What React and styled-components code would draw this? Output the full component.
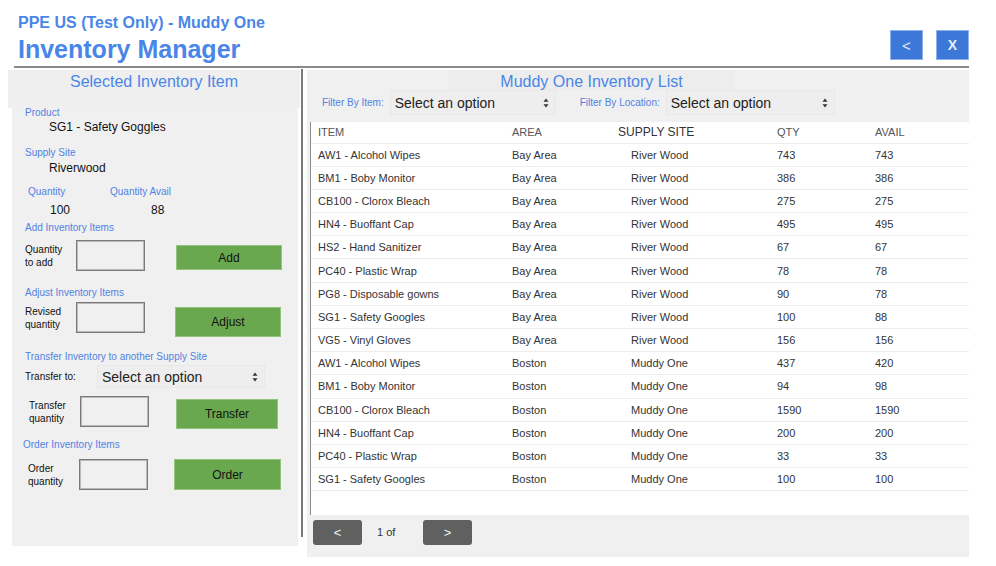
import React from "react";
import styled, { createGlobalStyle } from "styled-components";

const GlobalStyle = createGlobalStyle`
  html, body {
    margin: 0;
    padding: 0;
    background: #ffffff;
  }
  body {
    font-family: "Liberation Sans", Arial, sans-serif;
  }
`;

const BLUE = "#4a86e8";
const LABEL_BLUE = "#5282e4";

const inventory = [
  ["AW1 - Alcohol Wipes", "Bay Area", "River Wood", 743, 743],
  ["BM1 - Boby Monitor", "Bay Area", "River Wood", 386, 386],
  ["CB100 - Clorox Bleach", "Bay Area", "River Wood", 275, 275],
  ["HN4 - Buoffant Cap", "Bay Area", "River Wood", 495, 495],
  ["HS2 - Hand Sanitizer", "Bay Area", "River Wood", 67, 67],
  ["PC40 - Plastic Wrap", "Bay Area", "River Wood", 78, 78],
  ["PG8 - Disposable gowns", "Bay Area", "River Wood", 90, 78],
  ["SG1 - Safety Googles", "Bay Area", "River Wood", 100, 88],
  ["VG5 - Vinyl Gloves", "Bay Area", "River Wood", 156, 156],
  ["AW1 - Alcohol Wipes", "Boston", "Muddy One", 437, 420],
  ["BM1 - Boby Monitor", "Boston", "Muddy One", 94, 98],
  ["CB100 - Clorox Bleach", "Boston", "Muddy One", 1590, 1590],
  ["HN4 - Buoffant Cap", "Boston", "Muddy One", 200, 200],
  ["PC40 - Plastic Wrap", "Boston", "Muddy One", 33, 33],
  ["SG1 - Safety Googles", "Boston", "Muddy One", 100, 100],
];

const Page = styled.div`
  width: 996px;
  height: 566px;
  overflow: hidden;
  position: relative;
`;

const Header = styled.header`
  display: flex;
  justify-content: space-between;
  padding: 14px 27px 0 18px;
`;

const TitleGroup = styled.div`
  display: flex;
  flex-direction: column;
`;

const AppName = styled.div`
  font-size: 16px;
  line-height: 18px;
  font-weight: bold;
  color: ${BLUE};
`;

const PageTitle = styled.h1`
  margin: 2px 0 0;
  font-size: 25px;
  line-height: 30px;
  font-weight: bold;
  color: ${BLUE};
`;

const HeaderActions = styled.div`
  display: flex;
  gap: 13px;
  margin-top: 16px;
`;

const NavButton = styled.button`
  width: 33px;
  height: 30px;
  padding: 0;
  border: 1px solid #8fb2ee;
  background: #3c78d8;
  color: #e8eef8;
  font-family: "Liberation Sans", Arial, sans-serif;
  font-size: ${(p) => (p.$bold ? "14px" : "15px")};
  font-weight: ${(p) => (p.$bold ? "bold" : "normal")};
  cursor: pointer;
`;

const Rule = styled.hr`
  margin: 2px 27px 0 14px;
  border: 0;
  border-top: 2px solid #8a8a8a;
  height: 0;
`;

const Main = styled.main`
  display: flex;
  align-items: flex-start;
  padding-left: 8px;
  margin-top: 1px;
`;

/* ---------- left panel ---------- */

const LeftColumn = styled.section`
  width: 292px;
  margin-top: 1px;
  display: flex;
  flex-direction: column;
`;

const LeftTitle = styled.div`
  height: 38px;
  background: #efefef;
  text-align: center;
  font-size: 16px;
  line-height: 20px;
  padding-top: 2px;
  box-sizing: border-box;
  color: ${BLUE};
`;

const LeftBody = styled.div`
  margin: 0 2px 0 4px;
  height: 438px;
  background: #f0f0f0;
  padding-left: 13px;
  box-sizing: border-box;
  display: flex;
  flex-direction: column;
  align-items: flex-start;
`;

const FieldLabel = styled.div`
  font-size: 10px;
  line-height: 10px;
  color: ${LABEL_BLUE};
  margin-top: ${(p) => p.$top || 0}px;
  margin-left: ${(p) => p.$left || 0}px;
  white-space: nowrap;
`;

const FieldValue = styled.div`
  font-size: 12px;
  line-height: 14px;
  color: #111;
  margin-top: ${(p) => p.$top || 0}px;
  padding-left: ${(p) => p.$indent || 0}px;
`;

const QtyGrid = styled.div`
  display: grid;
  grid-template-columns: 82px auto;
  margin-top: ${(p) => p.$top}px;
  padding-left: 3px;
`;

const QtyValue = styled.div`
  font-size: 12px;
  line-height: 14px;
  color: #111;
  padding-left: ${(p) => p.$indent}px;
`;

const ActionRow = styled.div`
  display: flex;
  align-items: center;
  margin-top: ${(p) => p.$top}px;
  height: 31px;
`;

const RowLabel = styled.div`
  width: ${(p) => p.$width}px;
  padding-left: ${(p) => p.$indent || 0}px;
  box-sizing: border-box;
  font-size: 10px;
  line-height: 13px;
  color: #111;
`;

const QtyInput = styled.input`
  width: 69px;
  height: 31px;
  box-sizing: border-box;
  border: 1px solid #7a7a7a;
  box-shadow: inset 0 0 0 1px #b9b9b9;
  background: #f0f0f0;
  padding: 0 4px;
  font-size: 12px;
`;

const GreenButton = styled.button`
  width: ${(p) => p.$width}px;
  height: ${(p) => p.$height}px;
  margin-left: ${(p) => p.$gap}px;
  align-self: flex-start;
  margin-top: ${(p) => p.$offset}px;
  background: #6aa84f;
  border: 1px solid #93c47d;
  color: #111;
  font-family: "Liberation Sans", Arial, sans-serif;
  font-size: 12px;
  padding: 0;
  cursor: pointer;
`;

const SelectRow = styled.div`
  display: flex;
  align-items: center;
  height: 23px;
  margin-top: ${(p) => p.$top}px;
`;

const SelectBox = styled.div`
  width: ${(p) => p.$width}px;
  height: ${(p) => p.$height}px;
  box-sizing: border-box;
  background: #eeeeee;
  border: 1px solid #e8e8e8;
  display: flex;
  align-items: center;
  justify-content: space-between;
  padding: 0 6px 0 4px;
  font-size: 14px;
  color: #222;
`;

const Divider = styled.div`
  width: 2px;
  height: 468px;
  margin-left: 1px;
  background: #7a7a7a;
`;

/* ---------- right panel ---------- */

const RightPanel = styled.section`
  width: 662px;
  margin-left: 4px;
  margin-top: 1px;
  height: 487px;
  background: #f0f0f0;
  display: flex;
  flex-direction: column;
`;

const RightTitle = styled.div`
  margin-left: 141px;
  width: 287px;
  height: 20px;
  background: #ededed;
  text-align: center;
  font-size: 16px;
  line-height: 23px;
  color: ${BLUE};
`;

const FilterRow = styled.div`
  display: flex;
  align-items: center;
  height: 25px;
  padding-left: 15px;
`;

const FilterLabel = styled.span`
  font-size: 10px;
  color: ${LABEL_BLUE};
  margin-left: ${(p) => p.$left || 0}px;
  margin-right: 6px;
  white-space: nowrap;
`;

const TableWrap = styled.div`
  margin: 7px 0 0 3px;
  height: 393px;
  background: #ffffff;
  border-left: 1px solid #8c8c8c;
`;

const Row = styled.div`
  display: grid;
  grid-template-columns: 194px 106px 159px 98px 1fr;
  align-items: center;
  padding-left: 7px;
  height: ${(p) => (p.$head ? "21.5px" : "23.2px")};
  box-sizing: border-box;
  border-bottom: 1px solid #ececec;
  font-size: 11px;
  color: ${(p) => (p.$head ? "#555" : "#333")};
`;

const Cell = styled.div`
  padding-left: ${(p) => p.$indent || 0}px;
  white-space: nowrap;
  font-size: ${(p) => (p.$big ? "12px" : "inherit")};
  color: ${(p) => (p.$big ? "#333" : "inherit")};
`;

const Pager = styled.div`
  display: flex;
  align-items: flex-start;
  height: 42px;
  padding: 5px 0 0 6px;
  box-sizing: border-box;
  align-self: stretch;
`;

const PageButton = styled.button`
  width: 49px;
  height: 25px;
  border: 0;
  border-radius: 3px;
  background: #606060;
  color: #f2f2f2;
  font-family: "Liberation Sans", Arial, sans-serif;
  font-size: 13px;
  padding: 0;
  cursor: pointer;
`;

const PageInfo = styled.span`
  font-size: 11px;
  line-height: 25px;
  color: #333;
  margin-left: 15px;
  width: 46px;
`;

const UpDown = () => (
  <svg width="6" height="10" viewBox="0 0 6 10">
    <path d="M3 0.5 L5.5 3.8 L0.5 3.8 Z" fill="#333" />
    <path d="M3 9.5 L5.5 6.2 L0.5 6.2 Z" fill="#333" />
  </svg>
);

const Select = ({ width, height }) => (
  <SelectBox $width={width} $height={height}>
    <span>Select an option</span>
    <UpDown />
  </SelectBox>
);

const App = () => {
  return (
    <>
      <GlobalStyle />
      <Page>
        <Header>
          <TitleGroup>
            <AppName>PPE US (Test Only) - Muddy One</AppName>
            <PageTitle>Inventory Manager</PageTitle>
          </TitleGroup>
          <HeaderActions>
            <NavButton>&lt;</NavButton>
            <NavButton $bold>X</NavButton>
          </HeaderActions>
        </Header>
        <Rule />
        <Main>
          <LeftColumn>
            <LeftTitle>Selected Inventory Item</LeftTitle>
            <LeftBody>
              <FieldLabel>Product</FieldLabel>
              <FieldValue $top={2} $indent={24}>
                SG1 - Safety Goggles
              </FieldValue>
              <FieldLabel $top={14}>Supply Site</FieldLabel>
              <FieldValue $top={3} $indent={24}>
                Riverwood
              </FieldValue>
              <QtyGrid $top={12}>
                <FieldLabel>Quantity</FieldLabel>
                <FieldLabel>Quantity Avail</FieldLabel>
              </QtyGrid>
              <QtyGrid $top={6}>
                <QtyValue $indent={22}>100</QtyValue>
                <QtyValue $indent={41}>88</QtyValue>
              </QtyGrid>

              <FieldLabel $top={6}>Add Inventory Items</FieldLabel>
              <ActionRow $top={7}>
                <RowLabel $width={51}>
                  Quantity
                  <br />
                  to add
                </RowLabel>
                <QtyInput />
                <GreenButton $width={106} $height={25} $gap={31} $offset={5}>
                  Add
                </GreenButton>
              </ActionRow>

              <FieldLabel $top={17}>Adjust Inventory Items</FieldLabel>
              <ActionRow $top={4}>
                <RowLabel $width={51}>
                  Revised
                  <br />
                  quantity
                </RowLabel>
                <QtyInput />
                <GreenButton $width={106} $height={30} $gap={30} $offset={5}>
                  Adjust
                </GreenButton>
              </ActionRow>

              <FieldLabel $top={19}>
                Transfer Inventory to another Supply Site
              </FieldLabel>
              <SelectRow $top={3}>
                <RowLabel $width={72}>Transfer to:</RowLabel>
                <Select width={168} height={23} />
              </SelectRow>
              <ActionRow $top={8}>
                <RowLabel $width={55} $indent={4}>
                  Transfer
                  <br />
                  quantity
                </RowLabel>
                <QtyInput />
                <GreenButton $width={102} $height={30} $gap={27} $offset={3}>
                  Transfer
                </GreenButton>
              </ActionRow>

              <FieldLabel $top={13} $left={-2}>
                Order Inventory Items
              </FieldLabel>
              <ActionRow $top={9}>
                <RowLabel $width={54} $indent={3}>
                  Order
                  <br />
                  quantity
                </RowLabel>
                <QtyInput />
                <GreenButton $width={107} $height={31} $gap={26} $offset={0}>
                  Order
                </GreenButton>
              </ActionRow>
            </LeftBody>
          </LeftColumn>

          <Divider />

          <RightPanel>
            <RightTitle>Muddy One Inventory List</RightTitle>
            <FilterRow>
              <FilterLabel>Filter By Item:</FilterLabel>
              <Select width={166} height={25} />
              <FilterLabel $left={24}>Filter By Location:</FilterLabel>
              <Select width={169} height={25} />
            </FilterRow>
            <TableWrap>
              <Row $head>
                <Cell>ITEM</Cell>
                <Cell>AREA</Cell>
                <Cell $big>SUPPLY SITE</Cell>
                <Cell>QTY</Cell>
                <Cell>AVAIL</Cell>
              </Row>
              {inventory.map(([item, area, site, qty, avail], i) => (
                <Row key={i}>
                  <Cell>{item}</Cell>
                  <Cell>{area}</Cell>
                  <Cell $indent={13}>{site}</Cell>
                  <Cell>{qty}</Cell>
                  <Cell>{avail}</Cell>
                </Row>
              ))}
            </TableWrap>
            <Pager>
              <PageButton>&lt;</PageButton>
              <PageInfo>1 of</PageInfo>
              <PageButton>&gt;</PageButton>
            </Pager>
          </RightPanel>
        </Main>
      </Page>
    </>
  );
};

export default App;
